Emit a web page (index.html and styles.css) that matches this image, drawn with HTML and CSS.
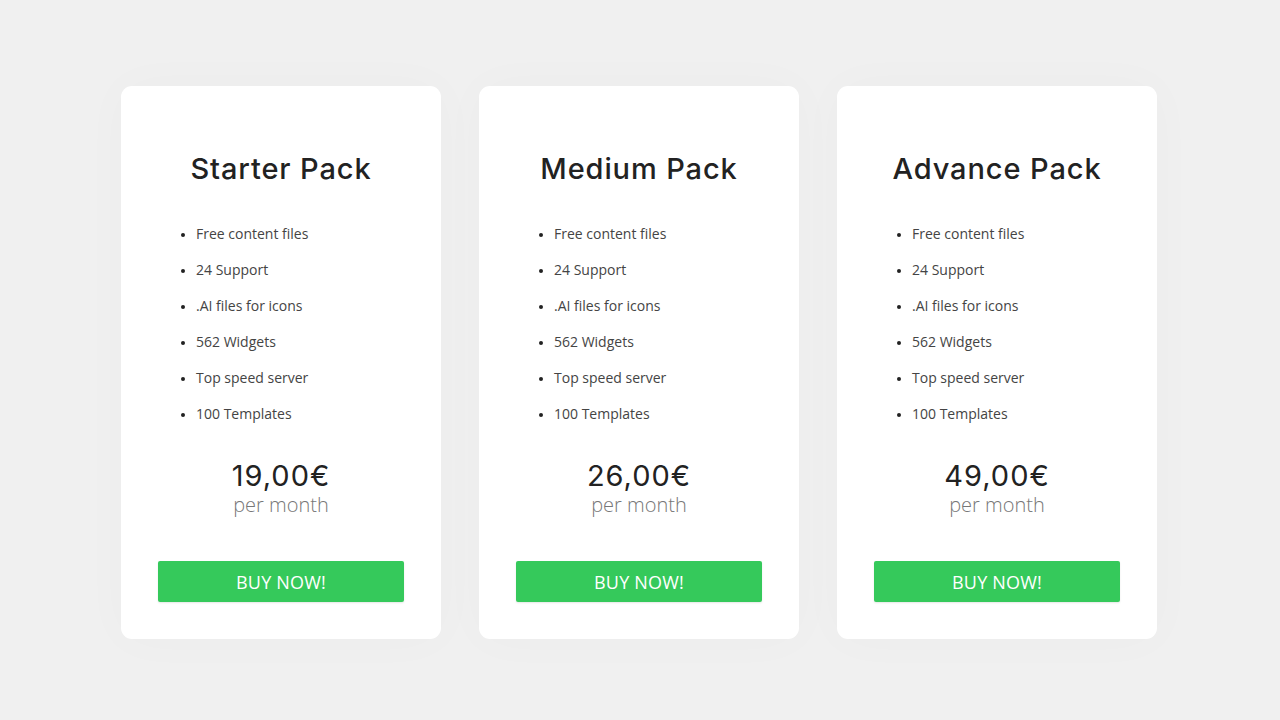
FILE: index.html
```html
<!DOCTYPE html>
<html lang="en">
<head>
<meta charset="utf-8">
<title>Pricing</title>
<link rel="stylesheet" href="styles.css">
</head>
<body>
<main class="pricing">
  <section class="card">
    <h2 class="title">Starter Pack</h2>
    <ul class="features">
      <li>Free content files</li>
      <li>24 Support</li>
      <li>.AI files for icons</li>
      <li>562 Widgets</li>
      <li>Top speed server</li>
      <li>100 Templates</li>
    </ul>
    <div class="price">19,00€</div>
    <div class="period">per month</div>
    <button class="buy">BUY NOW!</button>
  </section>
  <section class="card">
    <h2 class="title">Medium Pack</h2>
    <ul class="features">
      <li>Free content files</li>
      <li>24 Support</li>
      <li>.AI files for icons</li>
      <li>562 Widgets</li>
      <li>Top speed server</li>
      <li>100 Templates</li>
    </ul>
    <div class="price">26,00€</div>
    <div class="period">per month</div>
    <button class="buy">BUY NOW!</button>
  </section>
  <section class="card">
    <h2 class="title">Advance Pack</h2>
    <ul class="features">
      <li>Free content files</li>
      <li>24 Support</li>
      <li>.AI files for icons</li>
      <li>562 Widgets</li>
      <li>Top speed server</li>
      <li>100 Templates</li>
    </ul>
    <div class="price">49,00€</div>
    <div class="period">per month</div>
    <button class="buy">BUY NOW!</button>
  </section>
</main>
</body>
</html>
```
FILE: styles.css
```css
* { box-sizing: border-box; }
html, body { margin: 0; padding: 0; }
body {
  width: 1280px;
  height: 720px;
  background: #f0f0f0;
  font-family: "Open Sans", "Noto Sans", sans-serif;
  overflow: hidden;
}
.pricing {
  display: flex;
  justify-content: center;
  gap: 38px;
  padding-top: 86px;
  padding-right: 2px;
}
.card {
  width: 320px;
  height: 553px;
  background: #ffffff;
  border-radius: 11px;
  box-shadow: 0 0 50px rgba(0, 0, 0, 0.025);
  padding: 66px 37px 0;
  display: flex;
  flex-direction: column;
  align-items: stretch;
}
.title {
  margin: 0;
  font-family: "Inter", "Lato", sans-serif;
  font-weight: 500;
  font-size: 29px;
  line-height: 34px;
  text-align: center;
  color: #222222;
  letter-spacing: 0.9px;
}
.features {
  margin: 30px 0 0;
  padding: 0 0 0 38px;
  list-style: disc;
  color: #444444;
  font-size: 14px;
  line-height: 36px;
}
.features li::marker { color: #222; font-size: 12px; }
.price {
  margin-top: 27px;
  font-family: "Inter", "Lato", sans-serif;
  font-size: 29px;
  line-height: 34px;
  text-align: center;
  color: #222222;
  font-weight: 400;
  letter-spacing: 1px;
}
.period {
  font-family: "Open Sans", sans-serif;
  font-weight: 300;
  font-size: 20px;
  line-height: 24px;
  text-align: center;
  color: #777777;
}
.buy {
  margin-top: 44px;
  height: 41px;
  width: 100%;
  border: none;
  border-radius: 2px;
  background: #35c95b;
  color: #ffffff;
  font-family: "Open Sans", sans-serif;
  font-size: 18px;
  letter-spacing: 0.2px;
  box-shadow: 0 1px 2px rgba(0,0,0,0.1);
}
```
